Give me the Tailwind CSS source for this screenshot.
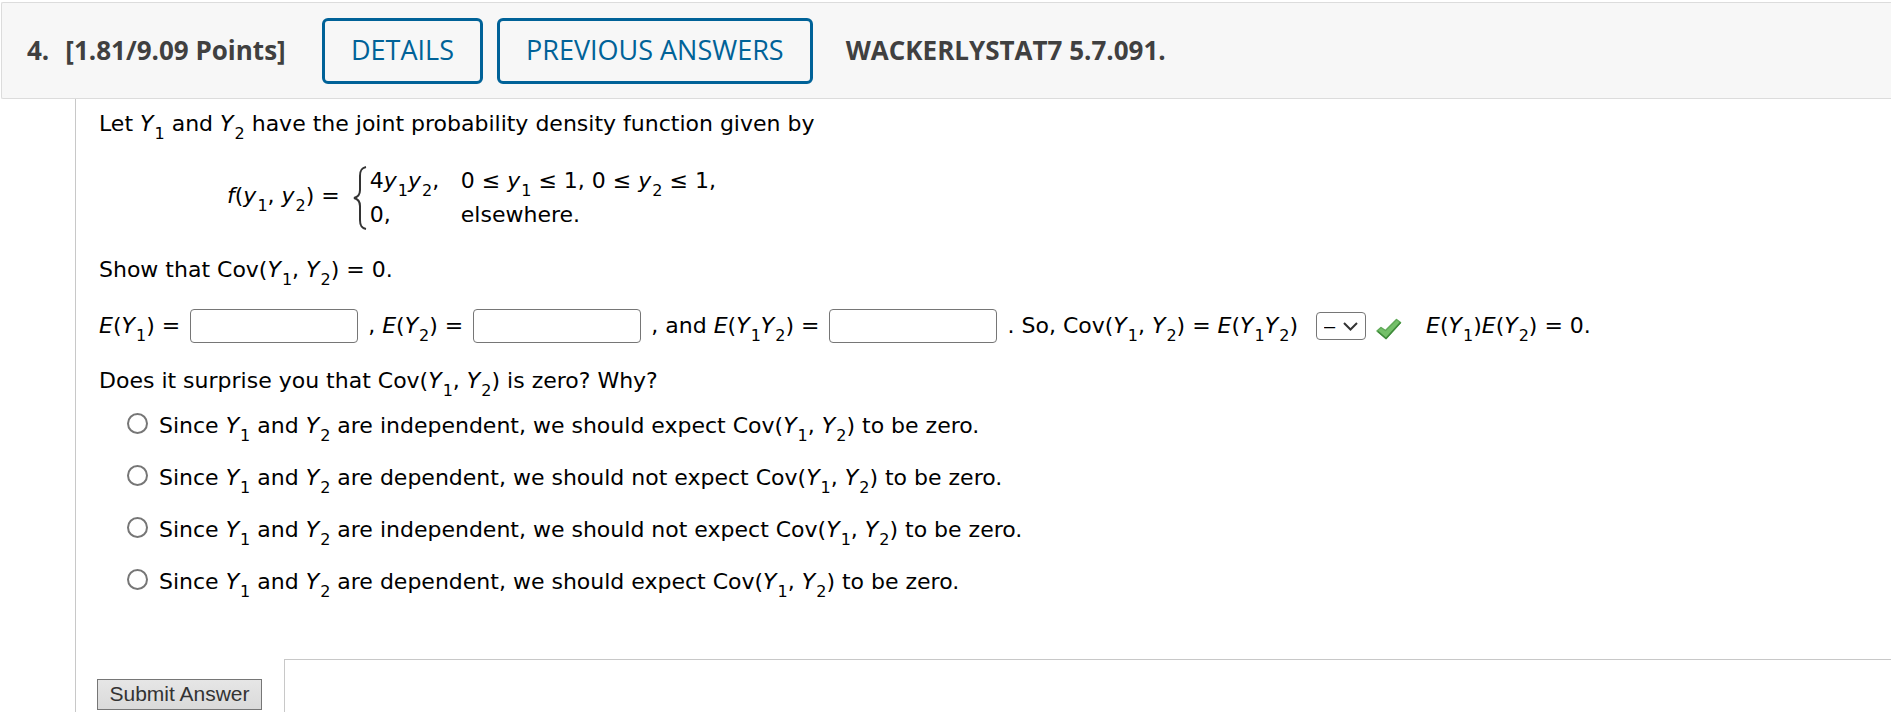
<!DOCTYPE html>
<html lang="en">
<head>
    <meta charset="UTF-8">
    <meta name="viewport" content="width=device-width, initial-scale=1.0">
    <title>WackerlyStat7 5.7.091</title>
    <script src="https://cdn.jsdelivr.net/npm/@tailwindcss/browser@4"></script>
</head>
<body class="flex min-h-screen flex-col bg-white pt-[2px] text-black font-['DejaVu_Sans',Verdana,sans-serif]">
    <header class="ml-px flex items-center border border-r-0 border-[#dcdcdc] rounded-l-xs bg-[#f7f7f7] pt-[15px] pb-[14px] pl-[25px] text-[26px] leading-[36px] text-[#404040] font-['Open_Sans',sans-serif]">
        <h1 class="flex w-[295px] gap-4 pb-[2px] font-bold"><span>4.</span><span>[1.81/9.09 Points]</span></h1>
        <button type="button" class="mr-[14px] h-[66px] rounded-md border-3 border-[#006298] px-[26px] pb-[2px] text-[27px] text-[#006298]">DETAILS</button>
        <button type="button" class="mr-[33px] h-[66px] rounded-md border-3 border-[#006298] px-[26px] pb-[2px] text-[27px] text-[#006298]">PREVIOUS ANSWERS</button>
        <strong class="pb-[2px] font-bold">WACKERLYSTAT7 5.7.091.</strong>
    </header>

    <main class="ml-[75px] flex flex-1 flex-col border-l border-[#c8c8c8] pt-[11px] text-[22px] leading-[28px] [&_sub]:static [&_sub]:pl-px [&_sub]:align-[-8px] [&_sub]:text-[16px]">
        <div class="pl-[23px]">
            <p>Let <i>Y</i><sub>1</sub> and <i>Y</i><sub>2</sub> have the joint probability density function given by</p>

            <!-- density function -->
            <div class="mt-[26px] ml-[128px] flex items-center">
                <span class="pb-1"><i>f</i>(<i>y</i><sub>1</sub>, <i>y</i><sub>2</sub>) =</span>
                <svg class="mr-[3px] ml-[13px] h-[64px] w-[14px]" viewBox="0 0 14 64" fill="none" stroke="#333" stroke-width="2">
                    <path d="M13 1C8 2 7 5 7 10V24C7 29 5 31 1 32C5 33 7 35 7 40V54C7 59 8 62 13 63"/>
                </svg>
                <div class="grid grid-cols-[91px_auto] leading-[34px]">
                    <span>4<i>y</i><sub>1</sub><i>y</i><sub>2</sub>,</span>
                    <span>0 ≤ <i>y</i><sub>1</sub> ≤ 1, 0 ≤ <i>y</i><sub>2</sub> ≤ 1,</span>
                    <span>0,</span>
                    <span>elsewhere.</span>
                </div>
            </div>

            <p class="mt-6">Show that Cov(<i>Y</i><sub>1</sub>, <i>Y</i><sub>2</sub>) = 0.</p>

            <div class="mt-[25px] flex items-center gap-x-[10px] leading-[34px] whitespace-nowrap">
                <label for="ey1"><i>E</i>(<i>Y</i><sub>1</sub>) =</label>
                <input id="ey1" type="text" class="h-[34px] w-[168px] rounded-sm border border-[#767676] px-1">
                <label for="ey2">, <i>E</i>(<i>Y</i><sub>2</sub>) =</label>
                <input id="ey2" type="text" class="h-[34px] w-[168px] rounded-sm border border-[#767676] px-1">
                <label for="ey12">, and <i>E</i>(<i>Y</i><sub>1</sub><i>Y</i><sub>2</sub>) =</label>
                <input id="ey12" type="text" class="h-[34px] w-[168px] rounded-sm border border-[#767676] px-1">
                <label for="sign" class="mr-2">. So, Cov(<i>Y</i><sub>1</sub>, <i>Y</i><sub>2</sub>) = <i>E</i>(<i>Y</i><sub>1</sub><i>Y</i><sub>2</sub>)</label>
                <span class="grid items-center">
                    <select id="sign" class="col-start-1 row-start-1 h-[28px] w-[50px] appearance-none rounded-sm border border-[#767676] pl-[7px] text-[20px] leading-[24px] font-['Liberation_Sans',Arial,sans-serif]">
                        <option>–</option>
                        <option>+</option>
                    </select>
                    <svg class="pointer-events-none col-start-1 row-start-1 mr-[8px] h-[9px] w-[15px] justify-self-end" viewBox="0 0 15 9" fill="none" stroke="#333" stroke-width="2">
                        <path d="M1 1L7.500 7.500L14 1"/>
                    </svg>
                </span>
                <svg class="mt-[6px] h-[22px] w-[26px]" viewBox="0 0 26 22" role="img" aria-label="Correct">
                    <path d="M1 13L5 9.500L9.500 12.500L20.500 1.500L24.500 4.500L10 20.500Z" fill="#74c069" stroke="#5fa957" stroke-width="1.500" stroke-linejoin="round"/>
                    <path d="M2 13.500L10 20.500L24.500 4.500" fill="none" stroke="#3f8a3b" stroke-width="1.500" stroke-linejoin="round"/>
                </svg>
                <span class="ml-[14px]"><i>E</i>(<i>Y</i><sub>1</sub>)<i>E</i>(<i>Y</i><sub>2</sub>) = 0.</span>
            </div>

            <fieldset class="mt-6">
                <legend>Does it surprise you that Cov(<i>Y</i><sub>1</sub>, <i>Y</i><sub>2</sub>) is zero? Why?</legend>
                <div class="mt-[17px] ml-[28px] flex flex-col items-start gap-6">
                    <label class="flex gap-[11px]">
                        <input type="radio" name="why" class="mt-px size-[21px] appearance-none rounded-full border-2 border-[#767676] checked:bg-[#767676]">
                        <span>Since <i>Y</i><sub>1</sub> and <i>Y</i><sub>2</sub> are independent, we should expect Cov(<i>Y</i><sub>1</sub>, <i>Y</i><sub>2</sub>) to be zero.</span>
                    </label>
                    <label class="flex gap-[11px]">
                        <input type="radio" name="why" class="mt-px size-[21px] appearance-none rounded-full border-2 border-[#767676] checked:bg-[#767676]">
                        <span>Since <i>Y</i><sub>1</sub> and <i>Y</i><sub>2</sub> are dependent, we should not expect Cov(<i>Y</i><sub>1</sub>, <i>Y</i><sub>2</sub>) to be zero.</span>
                    </label>
                    <label class="flex gap-[11px]">
                        <input type="radio" name="why" class="mt-px size-[21px] appearance-none rounded-full border-2 border-[#767676] checked:bg-[#767676]">
                        <span>Since <i>Y</i><sub>1</sub> and <i>Y</i><sub>2</sub> are independent, we should not expect Cov(<i>Y</i><sub>1</sub>, <i>Y</i><sub>2</sub>) to be zero.</span>
                    </label>
                    <label class="flex gap-[11px]">
                        <input type="radio" name="why" class="mt-px size-[21px] appearance-none rounded-full border-2 border-[#767676] checked:bg-[#767676]">
                        <span>Since <i>Y</i><sub>1</sub> and <i>Y</i><sub>2</sub> are dependent, we should expect Cov(<i>Y</i><sub>1</sub>, <i>Y</i><sub>2</sub>) to be zero.</span>
                    </label>
                </div>
            </fieldset>
        </div>

        <div class="mt-[63px] flex flex-1 pl-[21px]">
            <button type="button" class="mt-[20px] mr-[22px] mb-[2px] h-[31px] w-[165px] shrink-0 border border-[#767676] bg-linear-to-b from-[#e6e6e6] to-[#dadada] pb-[2px] text-[21px] leading-[26px] text-[#333] font-['Liberation_Sans',Arial,sans-serif]">Submit Answer</button>
            <div class="flex-1 border-t border-l border-[#c8c8c8]"></div>
        </div>
    </main>
</body>
</html>
